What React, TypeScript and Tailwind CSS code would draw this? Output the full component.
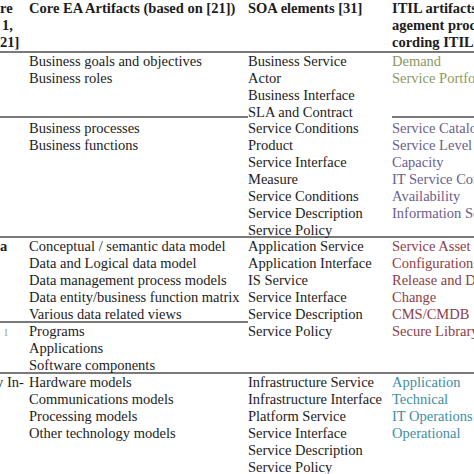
import React from "react";

const line = "border-b-2 border-[#7a7a7a]";

function Lines({ items, className = "" }: { items: string[]; className?: string }) {
  return (
    <div className={className}>
      {items.map((t, i) => (
        <div key={i} className="whitespace-nowrap">
          {t}
        </div>
      ))}
    </div>
  );
}

export default function App() {
  return (
    <div
      className="w-[474px] h-[474px] overflow-hidden bg-white text-[#1c1c1c] text-[14.5px] leading-[17px]"
      style={{ fontFamily: '"Liberation Serif", "Times New Roman", serif' }}
    >
      <div className="grid grid-cols-[29px_219px_144px_82px] grid-rows-[53px_65px_120px_85px_51px_100px]">
        {/* Header */}
        <div className={`${line} font-bold`}>
          <div>re</div>
          <div className="pl-[2px]">1,</div>
          <div>21]</div>
        </div>
        <div className={`${line} font-bold whitespace-nowrap`}>Core EA Artifacts (based on [21])</div>
        <div className={`${line} font-bold whitespace-nowrap`}>SOA elements [31]</div>
        <div className={`${line} font-bold`}>
          <Lines items={["ITIL artifacts (man-", "agement processes ac-", "cording ITIL v3)"]} />
        </div>

        {/* Row 1 */}
        <div className={line}></div>
        <div className={line}>
          <Lines items={["Business goals and objectives", "Business roles"]} />
        </div>
        <div className="relative z-10">
          <Lines items={["Business Service", "Actor", "Business Interface", "SLA and Contract"]} />
        </div>
        <div className={line}>
          <Lines className="text-[#8a9a62]" items={["Demand", "Service Portfolio"]} />
        </div>

        {/* Row 2 */}
        <div className={line}></div>
        <div className={`${line} pt-[1.5px]`}>
          <Lines items={["Business processes", "Business functions"]} />
        </div>
        <div className={`${line} pt-[1.5px]`}>
          <Lines
            items={[
              "Service Conditions",
              "Product",
              "Service Interface",
              "Measure",
              "Service Conditions",
              "Service Description",
              "Service Policy",
            ]}
          />
        </div>
        <div className={`${line} pt-[1.5px]`}>
          <Lines
            className="text-[#6a5e8e]"
            items={[
              "Service Catalogue",
              "Service Level",
              "Capacity",
              "IT Service Continuity",
              "Availability",
              "Information Security",
            ]}
          />
        </div>

        {/* Row 3 */}
        <div className={`${line} font-bold`}>a</div>
        <div className={line}>
          <Lines
            items={[
              "Conceptual / semantic data model",
              "Data and Logical data model",
              "Data management process models",
              "Data entity/business function matrix",
              "Various data related views",
            ]}
          />
        </div>
        <div className={`${line} row-span-2`}>
          <Lines
            items={[
              "Application Service",
              "Application Interface",
              "IS Service",
              "Service Interface",
              "Service Description",
              "Service Policy",
            ]}
          />
        </div>
        <div className={`${line} row-span-2`}>
          <Lines
            className="text-[#8f3d45]"
            items={[
              "Service Asset and",
              "Configuration",
              "Release and Deployment",
              "Change",
              "CMS/CMDB",
              "Secure Library",
            ]}
          />
        </div>

        {/* Row 4 */}
        <div className={line}>
          <div className="pl-[4px] text-[#b0b0b0]">ı</div>
        </div>
        <div className={line}>
          <Lines items={["Programs", "Applications", "Software components"]} />
        </div>

        {/* Row 5 */}
        <div className="overflow-hidden">
          <div className="whitespace-nowrap -ml-[4px]">y In-</div>
        </div>
        <div>
          <Lines
            items={["Hardware models", "Communications models", "Processing models", "Other technology models"]}
          />
        </div>
        <div>
          <Lines
            items={[
              "Infrastructure Service",
              "Infrastructure Interface",
              "Platform Service",
              "Service Interface",
              "Service Description",
              "Service Policy",
            ]}
          />
        </div>
        <div>
          <Lines className="text-[#3e8ea5]" items={["Application", "Technical", "IT Operations", "Operational"]} />
        </div>
      </div>
    </div>
  );
}
